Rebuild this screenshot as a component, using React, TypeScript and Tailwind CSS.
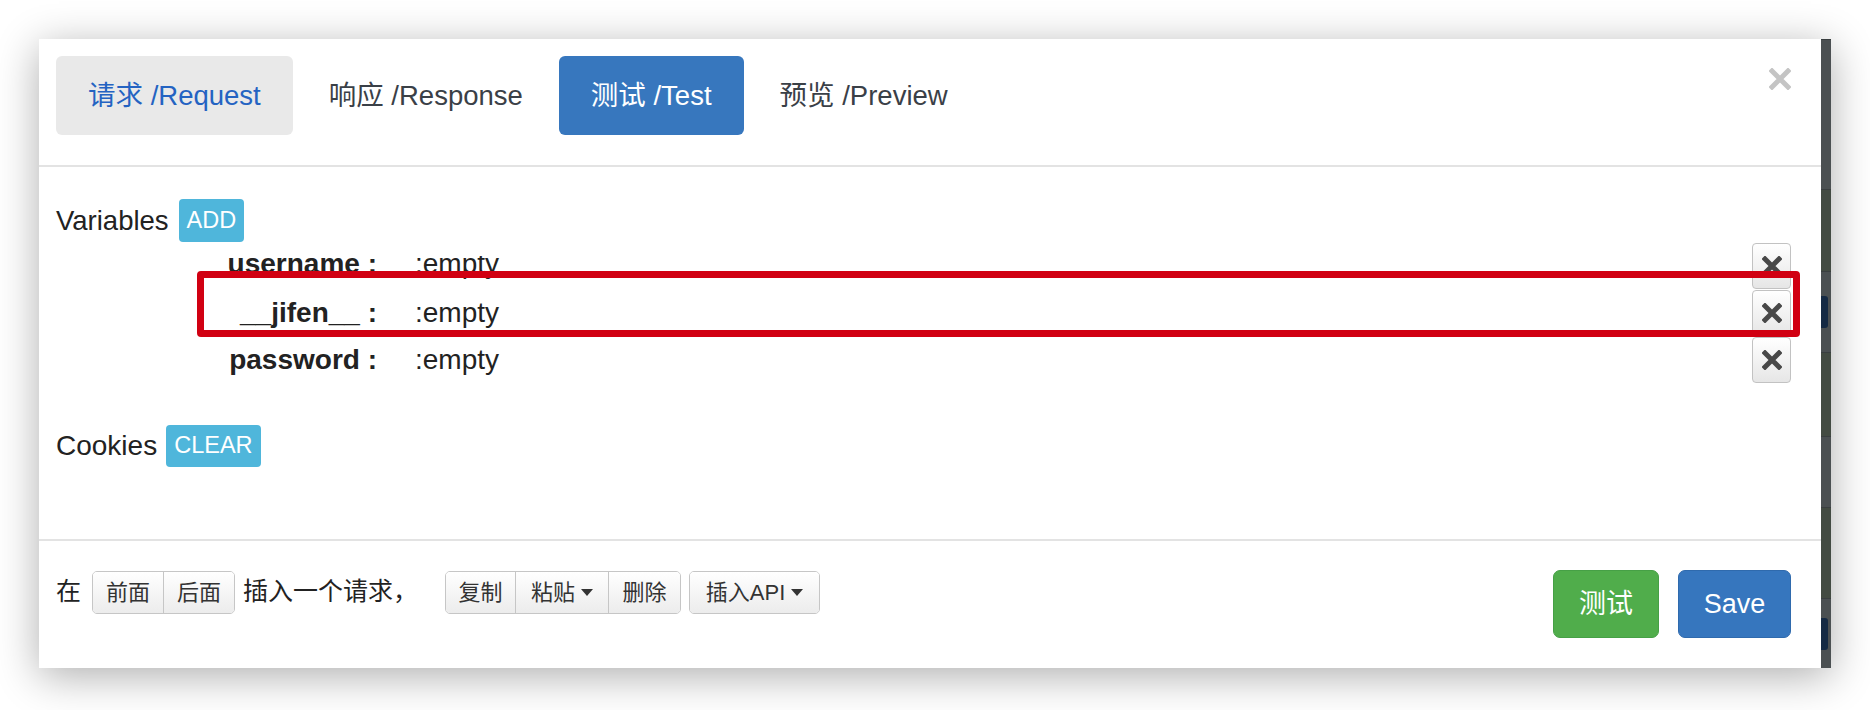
import React from "react";

const font = "font-['Liberation_Sans','Noto_Sans_CJK_SC',sans-serif]";

function RemoveIcon() {
  return (
    <svg width="20" height="20" viewBox="0 0 20 20">
      <path d="M3 3 L17 17 M17 3 L3 17" stroke="#484848" strokeWidth="5" strokeLinecap="square" />
    </svg>
  );
}

function Caret() {
  return (
    <svg width="12" height="7" viewBox="0 0 12 7" className="ml-[6px]">
      <path d="M0 0 L12 0 L6 7 Z" fill="#333" />
    </svg>
  );
}

const tabs = [
  { label: "请求 /Request", cls: "bg-[#e9e9e9] text-[#2463c2]" },
  { label: "响应 /Response", cls: "text-[#3a4047]" },
  { label: "测试 /Test", cls: "bg-[#3777be] text-white" },
  { label: "预览 /Preview", cls: "text-[#3a4047]" },
];

const variables = [
  { name: "username", clip: true },
  { name: "__jifen__", clip: false },
  { name: "password", clip: false },
];

const stripSegments = [
  { h: "h-[150px]", bg: "bg-[#4b5052]", navy: false },
  { h: "h-[82px]", bg: "bg-[#434b42]", navy: false },
  { h: "h-[81px]", bg: "bg-[#4b5052]", navy: true },
  { h: "h-[84px]", bg: "bg-[#434b42]", navy: false },
  { h: "h-[71px]", bg: "bg-[#4b5052]", navy: false },
  { h: "h-[91px]", bg: "bg-[#434b42]", navy: false },
  { h: "h-[70px]", bg: "bg-[#4b5052]", navy: true },
];

function SmallBtn({ children, className = "" }: { children: React.ReactNode; className?: string }) {
  return (
    <div
      className={`h-full flex items-center justify-center bg-gradient-to-b from-white to-[#ececec] text-[22px] text-[#333] ${className}`}
    >
      {children}
    </div>
  );
}

export default function App() {
  return (
    <div className={`relative w-[1870px] h-[710px] bg-white overflow-hidden pt-[39px] pl-[39px] ${font}`}>
      <div className="flex w-[1792px] h-[629px] shadow-[0_8px_40px_rgba(0,0,0,0.32)]">
        {/* Modal */}
        <div className="w-[1782px] h-full bg-white rounded-br-[8px] flex flex-col">
          {/* Header with tabs */}
          <div className="h-[128px] border-b-2 border-[#e3e3e3] flex justify-between pl-[17px] pr-[30px] pt-[17px]">
            <div className="flex gap-[4px]">
              {tabs.map((t) => (
                <div
                  key={t.label}
                  className={`h-[79px] px-[32px] flex items-center rounded-[6px] text-[27.5px] leading-none ${t.cls}`}
                >
                  {t.label}
                </div>
              ))}
            </div>
            <div className="mt-[12px]">
              <svg width="22" height="22" viewBox="0 0 22 22">
                <path d="M3 3 L19 19 M19 3 L3 19" stroke="#c4c4c4" strokeWidth="5" strokeLinecap="square" />
              </svg>
            </div>
          </div>

          {/* Body */}
          <div className="h-[372px] pl-[17px] pr-[30px] pt-[32px] text-[#222]">
            <div className="flex items-center h-[43px]">
              <span className="text-[27.5px] leading-none">Variables</span>
              <span className="ml-[10px] h-[43px] px-[8px] flex items-center bg-[#4fb6db] text-white text-[23.5px] rounded-[4px]">
                ADD
              </span>
            </div>

            <div className="flex flex-col">
              {variables.map((v) => (
                <div key={v.name} className="h-[47px] flex items-center">
                  <div className={`flex-1 self-stretch flex ${v.clip ? "mt-[14px] overflow-hidden" : ""}`}>
                    <div className={`h-[47px] flex items-center text-[28px] leading-none ${v.clip ? "-mt-[16px]" : ""}`}>
                      <span className="w-[321px] text-right font-bold whitespace-pre">{v.name} :</span>
                      <span className="ml-[38px]">:empty</span>
                    </div>
                  </div>
                  <div className="w-[39px] h-[46px] flex items-center justify-center rounded-[4px] border border-[#c2c2c2] bg-gradient-to-b from-white to-[#e6e6e6]">
                    <RemoveIcon />
                  </div>
                </div>
              ))}
            </div>

            <div className="flex items-center h-[42px] mt-[42px]">
              <span className="text-[28px] leading-none">Cookies</span>
              <span className="ml-[9px] h-[42px] px-[8px] flex items-center bg-[#4fb6db] text-white text-[23.5px] rounded-[4px]">
                CLEAR
              </span>
            </div>
          </div>

          {/* Footer */}
          <div className="flex-1 border-t-2 border-[#e3e3e3] flex justify-between pl-[17px] pr-[30px] pt-[29px]">
            <div className="flex items-center h-[44px] text-[25px] text-[#222]">
              <span>在</span>
              <div className="ml-[11px] h-[43px] flex rounded-[5px] border border-[#c6c6c6] overflow-hidden">
                <SmallBtn className="w-[70px]">前面</SmallBtn>
                <SmallBtn className="w-[71px] border-l border-[#c6c6c6]">后面</SmallBtn>
              </div>
              <span className="ml-[8px]">插入一个请求，</span>
              <div className="ml-[27px] h-[43px] flex rounded-[5px] border border-[#c6c6c6] overflow-hidden">
                <SmallBtn className="w-[69px]">复制</SmallBtn>
                <SmallBtn className="w-[93px] border-l border-[#c6c6c6]">
                  粘贴
                  <Caret />
                </SmallBtn>
                <SmallBtn className="w-[72px] border-l border-[#c6c6c6]">删除</SmallBtn>
              </div>
              <div className="ml-[8px] h-[43px] flex rounded-[5px] border border-[#c6c6c6] overflow-hidden">
                <SmallBtn className="w-[129px]">
                  插入API
                  <Caret />
                </SmallBtn>
              </div>
            </div>
            <div className="flex gap-[19px]">
              <div className="w-[106px] h-[68px] flex items-center justify-center rounded-[7px] bg-[#50ad4b] border border-[#46a046] text-white text-[27px]">
                测试
              </div>
              <div className="w-[113px] h-[68px] flex items-center justify-center rounded-[7px] bg-[#3676be] border border-[#2f6aad] text-white text-[27px]">
                Save
              </div>
            </div>
          </div>
        </div>

        {/* page strip behind the modal */}
        <div className="w-[10px] h-full flex flex-col">
          {stripSegments.map((s, i) => (
            <div key={i} className={`${s.h} ${s.bg} border-t border-[#3a3f40] flex flex-col justify-center`}>
              {s.navy && <div className="h-[32px] w-[7px] rounded-r-[3px] bg-[#152a44]" />}
            </div>
          ))}
        </div>
      </div>

      {/* red annotation box */}
      <div className="absolute left-[197px] top-[271px] w-[1603px] h-[66px] border-[7px] border-[#d10012] rounded-[4px]" />
    </div>
  );
}
